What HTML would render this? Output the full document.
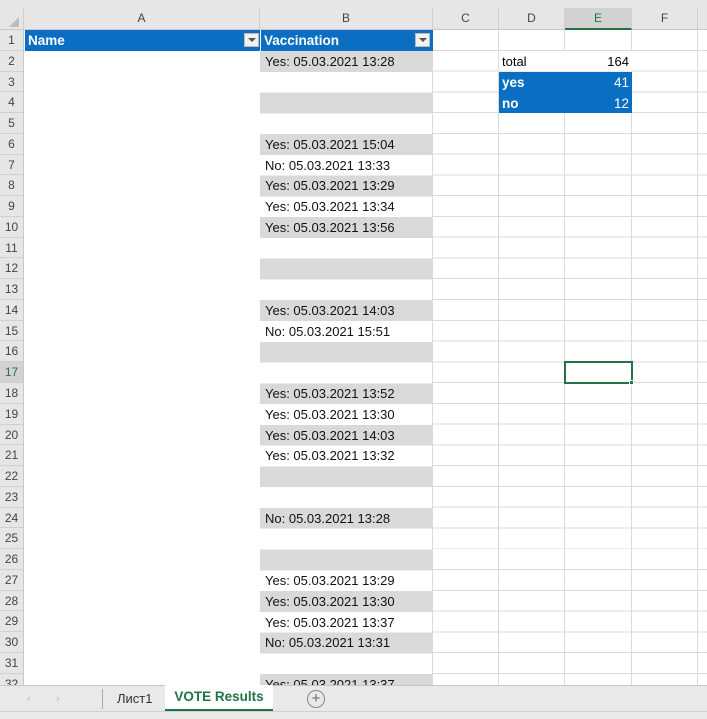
<!DOCTYPE html>
<html><head><meta charset="utf-8"><style>
*{margin:0;padding:0;box-sizing:border-box}
body{width:707px;height:719px;overflow:hidden;background:#fff;font-family:"Liberation Sans",Arial,sans-serif;position:relative}
.a{position:absolute}
#colhdr{left:0;top:0;width:707px;height:30px;background:#e6e6e6;border-bottom:1px solid #c8c8c8}
.ch{position:absolute;top:8px;height:22px;line-height:20px;text-align:center;font-size:12px;color:#444;border-right:1px solid #cfcfcf}
#rowhdr{left:0;top:30px;width:24px;height:660px;background:#e6e6e6;border-right:1px solid #c8c8c8}
.rn{height:20.77px;line-height:21px;text-align:center;font-size:12px;color:#444;border-bottom:1px solid #d0d0d0}
#grid{left:433px;top:30px;width:274px;height:660px;
background-image:repeating-linear-gradient(to bottom,transparent 0,transparent 19.77px,#dadada 19.77px,#dadada 20.77px)}
.vl{position:absolute;top:30px;width:1px;height:660px;background:#dadada}
#bcol{left:260px;top:50.77px;width:173px;height:640px;
background-image:repeating-linear-gradient(to bottom,#d9d9d9 0,#d9d9d9 20.77px,#fff 20.77px,#fff 41.54px)}
.t{position:absolute;left:265px;font-size:13px;color:#111;height:20.77px;line-height:21px}
.hd{position:absolute;top:30px;height:20.77px;background:#0a6fc2;color:#fff;font-weight:bold;font-size:13.5px;line-height:21px;padding-left:3px}
.dd{position:absolute;top:3px;width:15px;height:14px;background:#f2f2f2;border:1px solid #bbb}
.dd:after{content:"";position:absolute;left:3px;top:4px;border-left:4px solid transparent;border-right:4px solid transparent;border-top:4px solid #555}
</style></head><body>
<div class="a" id="grid"></div>
<div class="vl" style="left:498px"></div>
<div class="vl" style="left:564px"></div>
<div class="vl" style="left:631px"></div>
<div class="vl" style="left:697px"></div>
<div class="a" id="bcol"></div>
<div class="a" style="left:432px;top:30px;width:1px;height:660px;background:#dadada"></div>

<div class="a" id="colhdr">
<div class="a" style="left:0;top:8px;width:24px;height:22px;border-right:1px solid #cfcfcf"><div style="position:absolute;right:4px;bottom:3px;border-left:10px solid transparent;border-bottom:10px solid #bdbdbd"></div></div>
<div class="ch" style="left:24px;width:236px">A</div>
<div class="ch" style="left:260px;width:173px">B</div>
<div class="ch" style="left:433px;width:66px">C</div>
<div class="ch" style="left:499px;width:66px">D</div>
<div class="ch" style="left:565px;width:67px;background:#d2d2d2;color:#217346;border-bottom:2px solid #217346">E</div>
<div class="ch" style="left:632px;width:66px">F</div>
</div>

<div class="a" id="rowhdr">
<div class="rn">1</div><div class="rn">2</div><div class="rn">3</div><div class="rn">4</div><div class="rn">5</div><div class="rn">6</div><div class="rn">7</div><div class="rn">8</div><div class="rn">9</div><div class="rn">10</div><div class="rn">11</div><div class="rn">12</div><div class="rn">13</div><div class="rn">14</div><div class="rn">15</div><div class="rn">16</div><div class="rn" style="background:#d2d2d2;color:#217346">17</div><div class="rn">18</div><div class="rn">19</div><div class="rn">20</div><div class="rn">21</div><div class="rn">22</div><div class="rn">23</div><div class="rn">24</div><div class="rn">25</div><div class="rn">26</div><div class="rn">27</div><div class="rn">28</div><div class="rn">29</div><div class="rn">30</div><div class="rn">31</div><div class="rn">32</div>
</div>

<div class="hd" style="left:25px;width:235px">Name<div class="dd" style="left:219px"></div></div>
<div class="hd" style="left:261px;width:172px">Vaccination<div class="dd" style="left:154px"></div></div>

<div class="t" style="top:50.8px">Yes: 05.03.2021 13:28</div>
<div class="t" style="top:133.9px">Yes: 05.03.2021 15:04</div>
<div class="t" style="top:154.6px">No: 05.03.2021 13:33</div>
<div class="t" style="top:175.4px">Yes: 05.03.2021 13:29</div>
<div class="t" style="top:196.2px">Yes: 05.03.2021 13:34</div>
<div class="t" style="top:216.9px">Yes: 05.03.2021 13:56</div>
<div class="t" style="top:300px">Yes: 05.03.2021 14:03</div>
<div class="t" style="top:320.8px">No: 05.03.2021 15:51</div>
<div class="t" style="top:383.1px">Yes: 05.03.2021 13:52</div>
<div class="t" style="top:403.9px">Yes: 05.03.2021 13:30</div>
<div class="t" style="top:424.6px">Yes: 05.03.2021 14:03</div>
<div class="t" style="top:445.4px">Yes: 05.03.2021 13:32</div>
<div class="t" style="top:507.7px">No: 05.03.2021 13:28</div>
<div class="t" style="top:570px">Yes: 05.03.2021 13:29</div>
<div class="t" style="top:590.8px">Yes: 05.03.2021 13:30</div>
<div class="t" style="top:611.6px">Yes: 05.03.2021 13:37</div>
<div class="t" style="top:632.3px">No: 05.03.2021 13:31</div>
<div class="t" style="top:673.9px">Yes: 05.03.2021 13:37</div>

<div class="a" style="left:499px;top:50.8px;width:133px;height:20px;font-size:13px;line-height:21px;background:#fff">
<span style="position:absolute;left:3px">total</span><span style="position:absolute;right:3px">164</span></div>
<div class="a" style="left:499px;top:71.5px;width:133px;height:41.5px;background:#0a6fc2;color:#fff;font-size:13.5px;line-height:21px">
<span style="position:absolute;left:3px;top:0;font-weight:bold">yes</span><span style="position:absolute;right:3px;top:0">41</span>
<span style="position:absolute;left:3px;top:21px;font-weight:bold">no</span><span style="position:absolute;right:3px;top:21px">12</span></div>

<div class="a" style="left:564px;top:361px;width:69px;height:23px;border:2px solid #217346"></div>
<div class="a" style="left:629px;top:380px;width:5px;height:5px;background:#217346;border:1px solid #fff"></div>

<div class="a" style="left:0;top:685px;width:707px;height:34px;background:#e9e9e9;border-top:1px solid #c6c6c6">
<span class="a" style="left:27px;top:7px;font-size:11px;color:#bbb">&#8249;</span>
<span class="a" style="left:56px;top:7px;font-size:11px;color:#bbb">&#8250;</span>
<div class="a" style="left:102px;top:3px;width:1px;height:20px;background:#aaa"></div>
<span class="a" style="left:117px;top:5px;font-size:13px;color:#333">Лист1</span>
<div class="a" style="left:165px;top:-1px;width:108px;height:26px;background:#fff;border-bottom:2px solid #217346;font-size:13.5px;font-weight:bold;color:#217346;text-align:center;line-height:24px">VOTE Results</div>
<div class="a" style="left:307px;top:4px;width:18px;height:18px;border:1px solid #888;border-radius:50%;text-align:center;line-height:15px;font-size:15px;color:#666">+</div>
<div class="a" style="left:0;top:25px;width:707px;height:1px;background:#d0d0d0"></div>
</div>
</body></html>
